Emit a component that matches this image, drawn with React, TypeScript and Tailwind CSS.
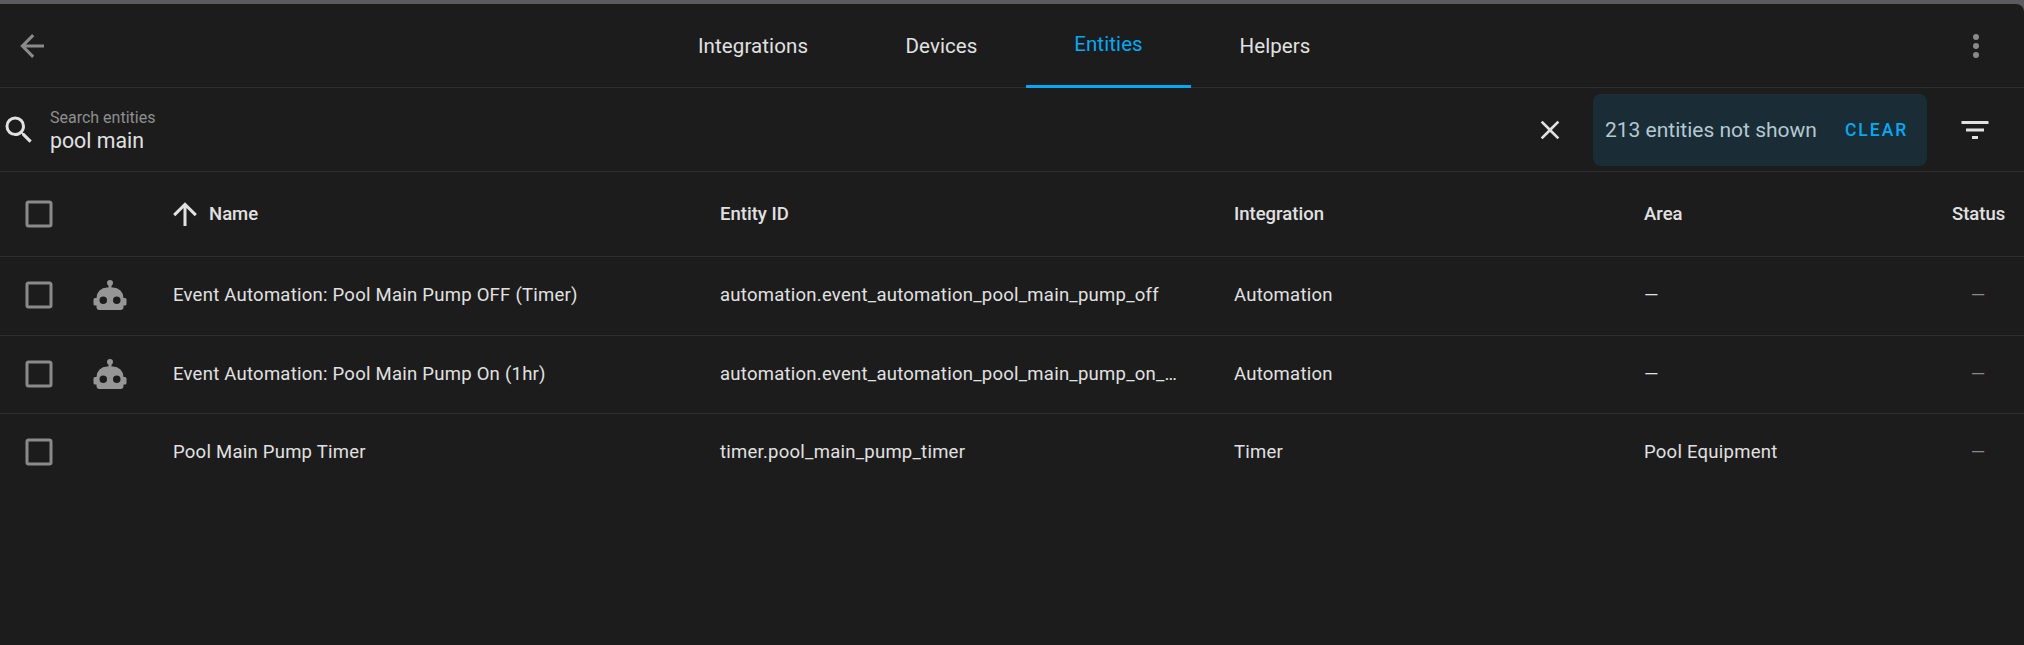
import React from 'react';

const mdi = {
  arrowLeft: 'M20,11V13H8L13.5,18.5L12.08,19.92L4.16,12L12.08,4.08L13.5,5.5L8,11H20Z',
  arrowUp: 'M13,20H11V8L5.5,13.5L4.08,12.08L12,4.16L19.92,12.08L18.5,13.5L13,8V20Z',
  dots: 'M12,16A2,2 0 0,1 14,18A2,2 0 0,1 12,20A2,2 0 0,1 10,18A2,2 0 0,1 12,16M12,10A2,2 0 0,1 14,12A2,2 0 0,1 12,14A2,2 0 0,1 10,12A2,2 0 0,1 12,10M12,4A2,2 0 0,1 14,6A2,2 0 0,1 12,8A2,2 0 0,1 10,6A2,2 0 0,1 12,4Z',
  magnify: 'M9.5,3A6.5,6.5 0 0,1 16,9.5C16,11.11 15.41,12.59 14.44,13.73L14.71,14H15.5L20.5,19L19,20.5L14,15.5V14.71L13.73,14.44C12.59,15.41 11.11,16 9.5,16A6.5,6.5 0 0,1 3,9.5A6.5,6.5 0 0,1 9.5,3M9.5,5C7,5 5,7 5,9.5C5,12 7,14 9.5,14C12,14 14,12 14,9.5C14,7 12,5 9.5,5Z',
  close: 'M19,6.41L17.59,5L12,10.59L6.41,5L5,6.41L10.59,12L5,17.59L6.41,19L12,13.41L17.59,19L19,17.59L13.41,12L19,6.41Z',
  filter: 'M6,13H18V11H6M3,6V8H21V6M10,18H14V16H10V18Z',
  checkbox: 'M19,3H5C3.89,3 3,3.89 3,5V19A2,2 0 0,0 5,21H19A2,2 0 0,0 21,19V5C21,3.89 20.1,3 19,3M19,5V19H5V5H19Z',
  robot: 'M12,2A2,2 0 0,1 14,4C14,4.74 13.6,5.39 13,5.73V7H14A7,7 0 0,1 21,14H22A1,1 0 0,1 23,15V18A1,1 0 0,1 22,19H21V20A2,2 0 0,1 19,22H5A2,2 0 0,1 3,20V19H2A1,1 0 0,1 1,18V15A1,1 0 0,1 2,14H3A7,7 0 0,1 10,7H11V5.73C10.4,5.39 10,4.74 10,4A2,2 0 0,1 12,2M7.5,13A2.5,2.5 0 0,0 5,15.5A2.5,2.5 0 0,0 7.5,18A2.5,2.5 0 0,0 10,15.5A2.5,2.5 0 0,0 7.5,13M16.5,13A2.5,2.5 0 0,0 14,15.5A2.5,2.5 0 0,0 16.5,18A2.5,2.5 0 0,0 19,15.5A2.5,2.5 0 0,0 16.5,13Z',
};

const Icon: React.FC<{ d: string; className?: string }> = ({ d, className }) => (
  <svg viewBox="0 0 24 24" fill="currentColor" className={className}>
    <path d={d} />
  </svg>
);

const rows = [
  {
    name: 'Event Automation: Pool Main Pump OFF (Timer)',
    id: 'automation.event_automation_pool_main_pump_off',
    integration: 'Automation',
    area: '—',
    robot: true,
  },
  {
    name: 'Event Automation: Pool Main Pump On (1hr)',
    id: 'automation.event_automation_pool_main_pump_on_…',
    integration: 'Automation',
    area: '—',
    robot: true,
  },
  {
    name: 'Pool Main Pump Timer',
    id: 'timer.pool_main_pump_timer',
    integration: 'Timer',
    area: 'Pool Equipment',
    robot: false,
  },
];

const cols = 'grid grid-cols-[92px_81px_547px_514px_410px_308px_52px] items-center';

const App: React.FC = () => {
  return (
    <div className="h-[645px] w-[2024px] overflow-hidden bg-[#5b5b60] pt-1 font-['Roboto',sans-serif]">
      <div className="h-full rounded-tr-lg bg-[#1c1c1c] text-[#e1e1e1]">
        {/* Tabs */}
        <header className="flex h-[84px] items-stretch border-b border-[#2f2f2f]">
          <div className="flex w-[649px] items-center pl-[14px]">
            <Icon d={mdi.arrowLeft} className="size-9 text-[#8a8a8a]" />
          </div>
          <nav className="flex text-[20.5px] font-normal tracking-[0.1px]">
            <a className="flex h-[84px] w-[208px] items-center justify-center">Integrations</a>
            <a className="flex h-[84px] w-[169px] items-center justify-center">Devices</a>
            <a className="flex h-[84px] w-[165px] items-center justify-center border-b-[3px] border-[#03a9f4] pb-[1px] text-[#03a9f4]">
              Entities
            </a>
            <a className="flex h-[84px] w-[168px] items-center justify-center">Helpers</a>
          </nav>
          <div className="ml-auto flex items-center pt-[1px] pr-[30px]">
            <Icon d={mdi.dots} className="size-9 text-[#8a8a8a]" />
          </div>
        </header>

        {/* Search */}
        <div className="flex h-[84px] items-center border-b border-[#2f2f2f]">
          <Icon d={mdi.magnify} className="ml-[1px] size-9 text-[#e1e1e1]" />
          <div className="ml-[13px] flex flex-col pt-[3px]">
            <span className="text-[16px] leading-[18px] text-[#8f8f8f]">Search entities</span>
            <span className="text-[21.3px] leading-[27px]">pool main</span>
          </div>
          <Icon d={mdi.close} className="ml-auto size-8 text-[#e1e1e1]" />
          <div className="ml-[27px] flex h-[72px] w-[334px] items-center rounded-lg bg-[#1a2d37] pt-[2px] pl-3">
            <span className="text-[21px] text-[#b4c8d2]">213 entities not shown</span>
            <span className="ml-7 text-[17.5px] font-medium tracking-[2px] text-[#03a9f4]">CLEAR</span>
          </div>
          <Icon d={mdi.filter} className="mr-[31px] ml-[30px] size-9 text-[#e1e1e1]" />
        </div>

        {/* Table header */}
        <div className={`${cols} h-[85px] border-b border-[#2f2f2f] text-[18.5px] font-medium`}>
          <div className="pb-[1px] pl-[21px]">
            <Icon d={mdi.checkbox} className="size-9 text-[#8a8a8a]" />
          </div>
          <div />
          <div className="relative pt-[2px] pl-[36px]">
            <Icon d={mdi.arrowUp} className="absolute top-1/2 left-[-6px] size-9 -translate-y-1/2 text-[#e1e1e1]" />
            Name
          </div>
          <div className="pt-[2px]">Entity ID</div>
          <div className="pt-[2px]">Integration</div>
          <div className="pt-[2px]">Area</div>
          <div className="pt-[2px] text-center whitespace-nowrap">Status</div>
        </div>

        {/* Rows */}
        {rows.map(row => (
          <div
            key={row.name}
            className={`${cols} h-[78.5px] border-b border-[#2f2f2f] pb-[1.5px] text-[18.5px] tracking-[0.25px] last:border-transparent`}
          >
            <div className="pl-[21px]">
              <Icon d={mdi.checkbox} className="size-9 text-[#8a8a8a]" />
            </div>
            <div>{row.robot && <Icon d={mdi.robot} className="size-9 text-[#969696]" />}</div>
            <div className="truncate pt-[2px]">{row.name}</div>
            <div className="pt-[2px] whitespace-nowrap">{row.id}</div>
            <div className="pt-[2px]">{row.integration}</div>
            <div className="pt-[2px]">{row.area}</div>
            <div className="pt-[2px] text-center text-[#8a8a8a]">—</div>
          </div>
        ))}
      </div>
    </div>
  );
};

export default App;
